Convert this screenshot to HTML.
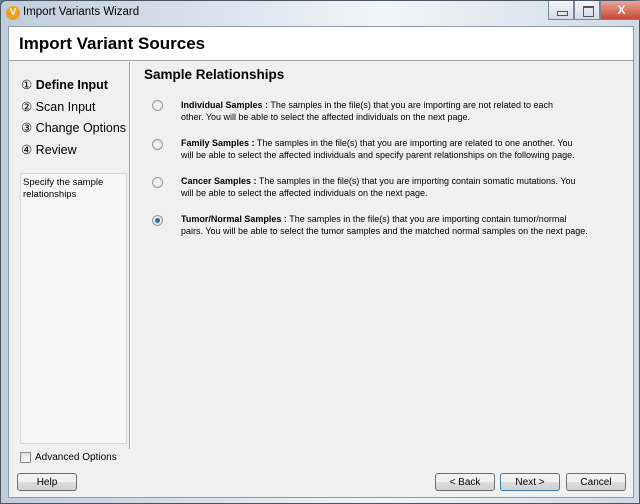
<!DOCTYPE html>
<html><head><style>
*{margin:0;padding:0;box-sizing:border-box}
body{width:640px;height:504px;overflow:hidden;background:#6c7b8b;font-family:"Liberation Sans",sans-serif;position:relative}
.win{position:absolute;left:0;top:0;width:640px;height:504px;background:linear-gradient(90deg,#bfcddb,#dfe7ef 40%,#f2f5f8 60%,#cfdae5);border:1px solid #4a5563;border-radius:6px 6px 0 0}
.title{position:absolute;left:22px;top:5px;font-size:11.5px;color:#000}
.logo{position:absolute;left:5px;top:5px;width:14px;height:14px;border-radius:50%;background:#f0a020;color:#fff;font-size:10px;font-weight:bold;text-align:center;line-height:14px}
.btns{position:absolute;left:547px;top:0;height:19px;display:flex}
.b{width:26px;height:19px;border:1px solid #7a8596;background:linear-gradient(#f3f5f8,#d3dbe5);border-top:none;position:relative}
.b1::after{content:"";position:absolute;left:8px;top:10px;width:9px;height:3px;border:1px solid #555}
.b2::after{content:"";position:absolute;left:8px;top:5px;width:9px;height:8px;border:1px solid #555;border-top-width:2px}
.x{width:43px;background:linear-gradient(#e9a79a,#c74734);color:#fff;font-weight:bold;font-size:12px;text-align:center;line-height:18px;border-radius:0 0 4px 0}
.client{position:absolute;left:7px;top:25px;width:626px;height:472px;background:#f0f0f0;border:1px solid #8e9aa8}
.hdr{position:absolute;left:0;top:0;width:624px;height:34px;background:#fff;border-bottom:1px solid #a0a0a0}
.hdr span{position:absolute;left:10px;top:7px;font-size:17px;font-weight:bold}
.sep{position:absolute;left:120px;top:35px;width:2px;height:387px;border-left:1px solid #a0a0a0;border-right:1px solid #fff}
.steps{position:absolute;left:12px;top:48px;font-size:12.5px;line-height:21.7px;color:#000}
.desc{position:absolute;left:11px;top:146px;width:107px;height:271px;background:#f7f7f7;border:1px solid #d8d8d8;font-size:9.5px;padding:3px 2px;line-height:11.5px}
.adv{position:absolute;left:11px;top:425px;font-size:10px;display:flex;align-items:center}
.cb{width:11px;height:11px;border:1px solid #8c8c8c;background:linear-gradient(#e0e0e0,#fafafa);margin-right:4px}
h2{position:absolute;left:135px;top:40px;font-size:13.5px;font-weight:bold}
.opt{position:absolute;left:172px;white-space:nowrap;font-size:9px;line-height:11.5px;color:#000}
.rad{position:absolute;left:143px;width:11px;height:11px;border-radius:50%;border:1px solid #9a9a9a;background:radial-gradient(#fff,#d8d8d8)}
.rad.on::after{content:"";position:absolute;left:2px;top:2px;width:5px;height:5px;border-radius:50%;background:#2a6fb0}
.btn{position:absolute;top:446px;height:18px;width:60px;border:1px solid #707070;border-radius:3px;background:linear-gradient(#f2f2f2 50%,#dddddd 50%,#cfcfcf);font-size:10px;display:flex;align-items:center;justify-content:center}
</style></head><body>
<div class="win">
<div class="logo">V</div><div class="title">Import Variants Wizard</div>
<div class="btns"><div class="b b1"></div><div class="b b2"></div><div class="b x">X</div></div>
<div class="client">
<div class="hdr"><span>Import Variant Sources</span></div>
<div class="sep"></div>
<div class="steps">① <b>Define Input</b><br>② Scan Input<br>③ Change Options<br>④ Review</div>
<div class="desc">Specify the sample relationships</div>
<div class="adv"><div class="cb"></div>Advanced Options</div>
<h2>Sample Relationships</h2>
<div class="rad" style="top:73px"></div>
<div class="opt" style="top:73px"><b>Individual Samples :</b> The samples in the file(s) that you are importing are not related to each<br>other. You will be able to select the affected individuals on the next page.</div>
<div class="rad" style="top:112px"></div>
<div class="opt" style="top:111px"><b>Family Samples :</b> The samples in the file(s) that you are importing are related to one another. You<br>will be able to select the affected individuals and specify parent relationships on the following page.</div>
<div class="rad" style="top:150px"></div>
<div class="opt" style="top:149px"><b>Cancer Samples :</b> The samples in the file(s) that you are importing contain somatic mutations. You<br>will be able to select the affected individuals on the next page.</div>
<div class="rad on" style="top:188px"></div>
<div class="opt" style="top:187px"><b>Tumor/Normal Samples :</b> The samples in the file(s) that you are importing contain tumor/normal<br>pairs. You will be able to select the tumor samples and the matched normal samples on the next page.</div>
<div class="btn" style="left:8px">Help</div>
<div class="btn" style="left:426px">&lt; Back</div>
<div class="btn" style="left:491px;border-color:#3c7fb1">Next &gt;</div>
<div class="btn" style="left:557px">Cancel</div>
</div>
</div>
</body></html>
